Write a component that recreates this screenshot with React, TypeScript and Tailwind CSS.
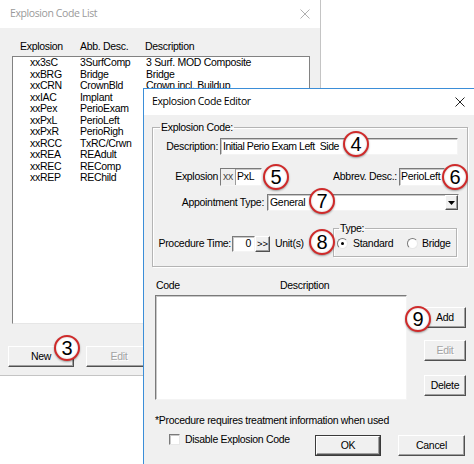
import React from "react";

const ui = "font-['Liberation_Sans',Arial,sans-serif] text-[10.5px] tracking-[-0.3px] text-black";
const titleFont = "font-['Open_Sans','Noto_Sans',sans-serif] text-[10.5px] tracking-[-0.4px]";
const sunken =
  "bg-white border border-t-[#7a7a7a] border-l-[#7a7a7a] border-b-[#f4f4f4] border-r-[#f4f4f4] shadow-[inset_1px_1px_0_#c8c8c8]";
const raised =
  "bg-[#f0f0f0] border border-t-white border-l-white border-b-[#505050] border-r-[#505050] shadow-[inset_-1px_-1px_0_#a0a0a0] flex items-center justify-center";
const disabledText = "text-[#a3a3a3] [text-shadow:1px_1px_0_#ffffff]";
const marker =
  "absolute w-[26px] h-[26px] rounded-full bg-white border-[2.5px] border-[#cf2a2a] shadow-[0_1px_2px_rgba(0,0,0,0.35),inset_0_0_2px_rgba(0,0,0,0.25)] flex items-center justify-center font-['Liberation_Sans',Arial,sans-serif] text-[20px] leading-none text-black";

function CloseX({ color }: { color: string }) {
  return (
    <svg width="10" height="10" viewBox="0 0 10 10" className="block">
      <path d="M0.5 0.5 L9.5 9.5 M9.5 0.5 L0.5 9.5" stroke={color} strokeWidth="1" fill="none" />
    </svg>
  );
}

const rows: [string, string, string][] = [
  ["xx3sC", "3SurfComp", "3 Surf. MOD Composite"],
  ["xxBRG", "Bridge", "Bridge"],
  ["xxCRN", "CrownBld", "Crown incl. Buildup"],
  ["xxIAC", "Implant", ""],
  ["xxPex", "PerioExam", ""],
  ["xxPxL", "PerioLeft", ""],
  ["xxPxR", "PerioRigh", ""],
  ["xxRCC", "TxRC/Crwn", ""],
  ["xxREA", "REAdult", ""],
  ["xxREC", "REComp", ""],
  ["xxREP", "REChild", ""],
];

function Radio({ checked }: { checked?: boolean }) {
  return (
    <div className="w-[11px] h-[11px] rounded-full bg-white border border-t-[#7a7a7a] border-l-[#7a7a7a] border-b-[#e8e8e8] border-r-[#e8e8e8] flex items-center justify-center">
      {checked && <div className="w-[3px] h-[3px] rounded-full bg-black" />}
    </div>
  );
}

export default function App() {
  return (
    <div className={`relative w-[474px] h-[464px] bg-white overflow-hidden ${ui}`}>
      {/* Back window: Explosion Code List */}
      <div className="absolute left-0 top-0 w-[321px] h-[376px] border-r border-b border-[#c4c4c4] flex flex-col">
        <div className="h-[28px] bg-white flex items-center justify-between pl-[10px] pr-[10px]">
          <span className={`${titleFont} text-[#9a9a9a]`}>Explosion Code List</span>
          <CloseX color="#b0b0b0" />
        </div>
        <div className="flex-1 bg-[#f0f0f0] pt-[12px] flex flex-col">
          <div className="flex pl-[20px] leading-[12px] h-[12px]">
            <span className="w-[60px]">Explosion</span>
            <span className="w-[65px]">Abb. Desc.</span>
            <span>Description</span>
          </div>
          <div className="mt-[4px] ml-[12px] w-[298px] h-[268px] bg-white border border-[#828282] border-b-[#e6e6e6] overflow-hidden">
            {rows.map(([c, a, d]) => (
              <div key={c} className="grid grid-cols-[50px_66px_1fr] pl-[17px] leading-[11.5px] h-[11.5px] whitespace-nowrap">
                <span>{c}</span>
                <span>{a}</span>
                <span>{d}</span>
              </div>
            ))}
          </div>
          <div className="mt-[22px] flex">
            <div className={`ml-[8px] w-[66px] h-[21px] ${raised}`}>New</div>
            <div className={`ml-[12px] w-[66px] h-[21px] ${raised} ${disabledText}`}>Edit</div>
          </div>
        </div>
      </div>

      {/* Front window: Explosion Code Editor */}
      <div className="absolute left-[143px] top-[88px] w-[331px] h-[376px] border-l border-t border-[#3b8ed8] bg-[#f0f0f0] flex flex-col">
        <div className="h-[26px] bg-white flex items-center justify-between pl-[8px] pr-[9px] shrink-0">
          <span className={`${titleFont} text-black`}>Explosion Code Editor</span>
          <CloseX color="#222222" />
        </div>
        <div className="pt-[6px] flex flex-col">
          <fieldset className="ml-[8px] w-[316px] border border-[#b4b4b4] shadow-[1px_1px_0_#ffffff,inset_1px_1px_0_#ffffff] pb-[9px]">
            <legend className="ml-[7px] px-[1px] leading-[13px]">Explosion Code:</legend>
            <div className="pt-[4px] flex flex-col">
              {/* Description */}
              <div className="flex items-center h-[17px]">
                <span className="w-[67px] text-right pr-[2px] whitespace-nowrap">Description:</span>
                <div className={`w-[238px] h-[17px] ${sunken} flex items-center pl-[2px] whitespace-nowrap tracking-[-0.45px]`}>
                  Initial Perio Exam Left&nbsp; Side
                </div>
              </div>
              {/* Explosion + Abbrev */}
              <div className="mt-[13px] flex items-center h-[18px]">
                <span className="w-[67px] text-right pr-[2px]">Explosion</span>
                <div className={`w-[42px] h-[18px] ${sunken} flex`}>
                  <div className="w-[15px] h-full bg-[#f0f0f0] border-r border-[#9a9a9a] flex items-center justify-center text-[#4a4a4a]">
                    xx
                  </div>
                  <div className="flex-1 flex items-center pl-[1px]">PxL</div>
                </div>
                <span className="w-[137px] text-right pr-[2px] whitespace-nowrap">Abbrev. Desc.:</span>
                <div className={`w-[46px] h-[18px] ${sunken} flex items-center pl-[1px] overflow-hidden whitespace-nowrap`}>
                  PerioLeft
                </div>
              </div>
              {/* Appointment Type */}
              <div className="mt-[8px] flex items-center h-[17px]">
                <span className="w-[114px] text-right pr-[3px] whitespace-nowrap">Appointment Type:</span>
                <div className={`w-[192px] h-[17px] ${sunken} flex items-stretch`}>
                  <div className="flex-1 flex items-center pl-[2px]">General</div>
                  <div className={`w-[13px] ${raised}`}>
                    <svg width="7" height="4" viewBox="0 0 7 4" className="block">
                      <path d="M0 0 L7 0 L3.5 4 Z" fill="#000" />
                    </svg>
                  </div>
                </div>
              </div>
              {/* Procedure time + Type */}
              <div className="mt-[11px] flex items-start">
                <span className="w-[78px] h-[16px] mt-[14px] flex items-center justify-end whitespace-nowrap">Procedure Time:</span>
                <div className={`ml-[1px] mt-[14px] w-[23px] h-[16px] ${sunken} flex items-center justify-end pr-[3px]`}>0</div>
                <div className={`mt-[14px] w-[15px] h-[16px] ${raised} text-[9.5px] tracking-[0px]`}>&gt;&gt;</div>
                <span className="ml-[5px] mt-[14px] w-[58px] h-[16px] flex items-center">Unit(s)</span>
                <fieldset className="w-[124px] h-[35px] border border-[#b4b4b4] shadow-[1px_1px_0_#ffffff,inset_1px_1px_0_#ffffff]">
                  <legend className="ml-[5px] px-[1px] leading-[13px]">Type:</legend>
                  <div className="flex items-center h-[16px] pt-[1px]">
                    <div className="ml-[3px] w-[70px] flex items-center">
                      <Radio checked />
                      <span className="ml-[5px]">Standard</span>
                    </div>
                    <div className="flex items-center">
                      <Radio />
                      <span className="ml-[4px]">Bridge</span>
                    </div>
                  </div>
                </fieldset>
              </div>
            </div>
          </fieldset>

          {/* Code list headers */}
          <div className="mt-[12px] flex h-[12px] leading-[12px]">
            <span className="ml-[12px] w-[124px]">Code</span>
            <span>Description</span>
          </div>
          <div className="mt-[4px] flex">
            <div className={`ml-[11px] w-[252px] h-[105px] ${sunken}`} />
            <div className="ml-[17px] w-[42px] flex flex-col">
              <div className={`mt-[12px] h-[21px] ${raised}`}>Add</div>
              <div className={`mt-[12px] h-[21px] ${raised} ${disabledText}`}>Edit</div>
              <div className={`mt-[14px] h-[21px] ${raised}`}>Delete</div>
            </div>
          </div>
          <div className="mt-[14px] ml-[11px] leading-[12px] h-[12px] whitespace-nowrap">
            *Procedure requires treatment information when used
          </div>
          <div className="mt-[8px] flex items-start">
            <div className="ml-[25px] w-[146px] flex items-center h-[11px]">
              <div className="w-[11px] h-[11px] bg-white border border-t-[#7a7a7a] border-l-[#7a7a7a] border-b-[#e8e8e8] border-r-[#e8e8e8] shadow-[inset_1px_1px_0_#c8c8c8]" />
              <span className="ml-[5px] whitespace-nowrap">Disable Explosion Code</span>
            </div>
            <div className="mt-[1px] w-[66px] h-[21px] border border-[#3a3a3a] flex">
              <div className={`flex-1 ${raised}`}>OK</div>
            </div>
            <div className={`ml-[17px] mt-[1px] w-[67px] h-[21px] ${raised}`}>Cancel</div>
          </div>
        </div>
      </div>

      {/* Callout markers */}
      <div className={`${marker} left-[54px] top-[335px]`}>3</div>
      <div className={`${marker} left-[343px] top-[131px]`}>4</div>
      <div className={`${marker} left-[263px] top-[164px]`}>5</div>
      <div className={`${marker} left-[442px] top-[164px]`}>6</div>
      <div className={`${marker} left-[309px] top-[188px]`}>7</div>
      <div className={`${marker} left-[309px] top-[229px]`}>8</div>
      <div className={`${marker} left-[405px] top-[306px]`}>9</div>
    </div>
  );
}
